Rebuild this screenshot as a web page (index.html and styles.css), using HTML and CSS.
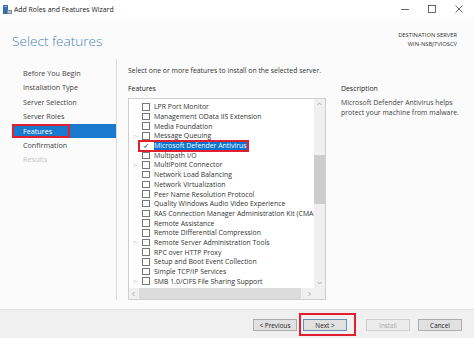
FILE: index.html
```html
<!DOCTYPE html>
<html lang="en">
<head>
  <meta charset="UTF-8" />
  <title>Add Roles and Features Wizard</title>
  <link rel="stylesheet" href="styles.css">
</head>
<body>
  <div class="window">
    <div class="titlebar">
      <svg class="app-icon" width="9" height="9" viewBox="0 0 9 9">
        <rect x="0" y="0" width="5" height="9" fill="#2f6fba" />
        <rect x="1" y="1" width="3" height="1" fill="#8fb8e6" />
        <rect x="4" y="5" width="5" height="4" fill="#7d8a96" />
        <rect x="5" y="6" width="3" height="2" fill="#b9c4ce" />
      </svg>
      <span class="title">Add Roles and Features Wizard</span>
      <div class="controls">
        <svg width="10" height="10" viewBox="0 0 10 10"><line x1="1" y1="5.5" x2="9" y2="5.5" stroke="#444" stroke-width="0.8" /></svg>
        <svg width="10" height="10" viewBox="0 0 10 10"><rect x="1.5" y="1.5" width="7" height="7" fill="none" stroke="#444" stroke-width="0.8" /></svg>
        <svg width="10" height="10" viewBox="0 0 10 10"><path d="M1.5 1.5 L8.5 8.5 M8.5 1.5 L1.5 8.5" stroke="#444" stroke-width="0.8" /></svg>
      </div>
    </div>

    <div class="header">
      <h1>Select features</h1>
      <div class="dest">
        <div>DESTINATION SERVER</div>
        <div>WIN-NSBJ7VIOSCV</div>
      </div>
    </div>

    <div class="main">
      <nav class="steps">
        <div class="step">Before You Begin</div>
        <div class="step">Installation Type</div>
        <div class="step">Server Selection</div>
        <div class="step">Server Roles</div>
        <div class="step active"><span class="mark">Features</span></div>
        <div class="step">Confirmation</div>
        <div class="step disabled">Results</div>
      </nav>

      <div class="content">
        <p class="intro">Select one or more features to install on the selected server.</p>
        <div class="columns">
          <div class="features">
            <div class="label">Features</div>
            <div class="listbox">
              <div class="list-area">
                <ul class="items">
                  <li><span class="exp"></span><span class="box"></span>LPR Port Monitor</li>
                  <li><span class="exp"></span><span class="box"></span>Management OData IIS Extension</li>
                  <li><span class="exp"></span><span class="box"></span>Media Foundation</li>
                  <li><span class="exp">&#9655;</span><span class="box"></span>Message Queuing</li>
                  <li><span class="exp"></span><span class="picked"><span class="box checked"><svg width="8" height="8" viewBox="0 0 8 8"><path d="M1.2 4.2 L3 6.2 L6.8 1.4" fill="none" stroke="#111" stroke-width="1.1" /></svg></span><span class="sel">Microsoft Defender Antivirus</span></span></li>
                  <li><span class="exp"></span><span class="box"></span>Multipath I/O</li>
                  <li><span class="exp">&#9655;</span><span class="box"></span>MultiPoint Connector</li>
                  <li><span class="exp"></span><span class="box"></span>Network Load Balancing</li>
                  <li><span class="exp"></span><span class="box"></span>Network Virtualization</li>
                  <li><span class="exp"></span><span class="box"></span>Peer Name Resolution Protocol</li>
                  <li><span class="exp"></span><span class="box"></span>Quality Windows Audio Video Experience</li>
                  <li><span class="exp"></span><span class="box"></span>RAS Connection Manager Administration Kit (CMAK)</li>
                  <li><span class="exp"></span><span class="box"></span>Remote Assistance</li>
                  <li><span class="exp"></span><span class="box"></span>Remote Differential Compression</li>
                  <li><span class="exp">&#9655;</span><span class="box"></span>Remote Server Administration Tools</li>
                  <li><span class="exp"></span><span class="box"></span>RPC over HTTP Proxy</li>
                  <li><span class="exp"></span><span class="box"></span>Setup and Boot Event Collection</li>
                  <li><span class="exp"></span><span class="box"></span>Simple TCP/IP Services</li>
                  <li><span class="exp">&#9655;</span><span class="box"></span>SMB 1.0/CIFS File Sharing Support</li>
                </ul>
                <div class="vscroll">
                  <svg class="arrow" width="11" height="10" viewBox="0 0 11 10"><path d="M3.5 6 L5.5 4 L7.5 6" fill="none" stroke="#9a9a9a" stroke-width="0.8" /></svg>
                  <div class="track"><div class="thumb"></div></div>
                  <svg class="arrow" width="11" height="10" viewBox="0 0 11 10"><path d="M3.5 4 L5.5 6 L7.5 4" fill="none" stroke="#9a9a9a" stroke-width="0.8" /></svg>
                </div>
              </div>
              <div class="hscroll">
                <svg class="arrow" width="9" height="10" viewBox="0 0 9 10"><path d="M5.5 3 L3.5 5 L5.5 7" fill="none" stroke="#9a9a9a" stroke-width="0.8" /></svg>
                <div class="htrack"><div class="hthumb"></div></div>
                <svg class="arrow" width="9" height="10" viewBox="0 0 9 10"><path d="M3.5 3 L5.5 5 L3.5 7" fill="none" stroke="#9a9a9a" stroke-width="0.8" /></svg>
                <div class="corner"></div>
              </div>
            </div>
          </div>
          <div class="desc">
            <div class="label">Description</div>
            <p>Microsoft Defender Antivirus helps protect your machine from malware.</p>
          </div>
        </div>
      </div>
    </div>

    <div class="footer">
      <button class="btn">&lt; Previous</button>
      <button class="btn default">Next &gt;</button>
      <button class="btn" disabled>Install</button>
      <button class="btn">Cancel</button>
    </div>
  </div>
</body>
</html>
```

FILE: styles.css
```css
/* Reset */
* {
  box-sizing: border-box;
  margin: 0;
  padding: 0;
}
body {
  font-family: 'Open Sans', 'Noto Sans', sans-serif;
  background: #fff;
  color: #1e1e1e;
  width: 474px;
  height: 338px;
  overflow: hidden;
}
.window {
  width: 474px;
  height: 338px;
  display: flex;
  flex-direction: column;
  background: #fbfbfb;
}
/* Title bar */
.titlebar {
  height: 18px;
  flex: none;
  display: flex;
  align-items: center;
  background: #fff;
  padding-left: 3px;
}
.app-icon {
  margin-right: 2px;
}
.title {
  font-size: 6.9px;
  color: #222;
}
.controls {
  margin-left: auto;
  display: flex;
  gap: 17px;
  padding-right: 10px;
}
/* Header */
.header {
  height: 40px;
  flex: none;
  display: flex;
  justify-content: space-between;
  align-items: flex-start;
  padding: 0 17px 0 12px;
}
.header h1 {
  font-weight: 300;
  font-size: 13.6px;
  line-height: 16px;
  color: #4f85b5;
  margin-top: 15px;
}
.dest {
  text-align: right;
  font-size: 5.8px;
  line-height: 8.5px;
  color: #333;
  padding-top: 13px;
}
/* Main */
.main {
  flex: none;
  height: 251px;
  display: flex;
}
.steps {
  width: 117px;
  flex: none;
  border-right: 1px solid #dcdcdc;
  padding: 7px 0 0 12px;
  margin: 1px 0 9px;
}
.step {
  height: 14.4px;
  line-height: 14.4px;
  font-size: 7.2px;
  color: #444;
  padding-left: 11px;
}
.step.active {
  background: #1979cc;
  color: #fff;
  padding-left: 0;
}
.step.active .mark {
  display: inline-block;
  height: 14.4px;
  line-height: 10.4px;
  padding: 0 16px 0 9px;
  border: 2px solid #e0202e;
}
.step.disabled {
  color: #c4c4c4;
}
.content {
  flex: 1;
  padding: 8px 14px 0 11px;
  font-size: 6.9px;
  color: #333;
}
.intro {
  line-height: 10px;
  margin-bottom: 8px;
}
.columns {
  display: flex;
  gap: 15px;
}
.label {
  line-height: 10px;
  color: #222;
  margin-bottom: 4px;
}
.features {
  width: 198px;
  flex: none;
}
/* List box */
.listbox {
  height: 202px;
  border: 1px solid #cfcfcf;
  background: #fff;
  display: flex;
  flex-direction: column;
}
.list-area {
  flex: 1;
  display: flex;
  min-height: 0;
}
.items {
  flex: 1;
  list-style: none;
  padding-top: 3px;
  overflow: hidden;
  white-space: nowrap;
}
.items li {
  height: 9.7px;
  display: flex;
  align-items: center;
  color: #333;
}
.exp {
  width: 13px;
  flex: none;
  font-size: 5px;
  color: #aaa;
  padding-left: 5px;
}
.box {
  width: 7.5px;
  height: 7.5px;
  flex: none;
  border: 1px solid #777;
  background: #fff;
  margin-right: 4.5px;
  display: flex;
  align-items: center;
  justify-content: center;
}
.box.checked {
  border-color: #fff;
}
.picked {
  position: relative;
  display: flex;
  align-items: center;
}
.picked::after {
  content: "";
  position: absolute;
  top: -1.5px;
  bottom: -1.5px;
  left: -4px;
  right: -2px;
  border: 2px solid #e0202e;
}
.sel {
  background: #0a74d0;
  color: #fff;
  line-height: 9px;
  padding: 0 1px 0 0;
}
.vscroll {
  width: 11px;
  flex: none;
  background: #f0f0f0;
  display: flex;
  flex-direction: column;
}
.arrow {
  flex: none;
  display: block;
}
.track {
  flex: 1;
}
.thumb {
  height: 49px;
  margin-top: 46px;
  background: #cdcdcd;
}
.hscroll {
  height: 11px;
  flex: none;
  background: #f0f0f0;
  display: flex;
  align-items: center;
}
.htrack {
  flex: 1;
  height: 11px;
  padding: 0 1px;
}
.hthumb {
  height: 11px;
  width: 162px;
  background: #dcdcdc;
}
.corner {
  width: 11px;
  height: 11px;
  background: #f0f0f0;
}
.desc {
  flex: 1;
}
.desc p {
  line-height: 9.5px;
  color: #444;
  margin-top: 1px;
}
/* Footer */
.footer {
  height: 29px;
  flex: none;
  background: #f0f0f0;
  border-top: 1px solid #e2e2e2;
  display: flex;
  align-items: flex-start;
  justify-content: flex-end;
  padding: 9px 12px 0 0;
}
.btn {
  width: 44px;
  height: 12px;
  font-family: inherit;
  font-size: 6.4px;
  color: #222;
  background: #e1e1e1;
  border: 1px solid #adadad;
  margin-left: 6px;
}
.btn.default {
  position: relative;
  border-color: #6d8fb3;
  margin-right: 13px;
}
.btn.default::after {
  content: "";
  position: absolute;
  top: -7px;
  bottom: -6px;
  left: -5px;
  right: -10px;
  border: 2px solid #e0202e;
}
.btn:disabled {
  color: #a8a8a8;
  background: #ececec;
  border-color: #cfcfcf;
  margin-right: 2px;
}
```
